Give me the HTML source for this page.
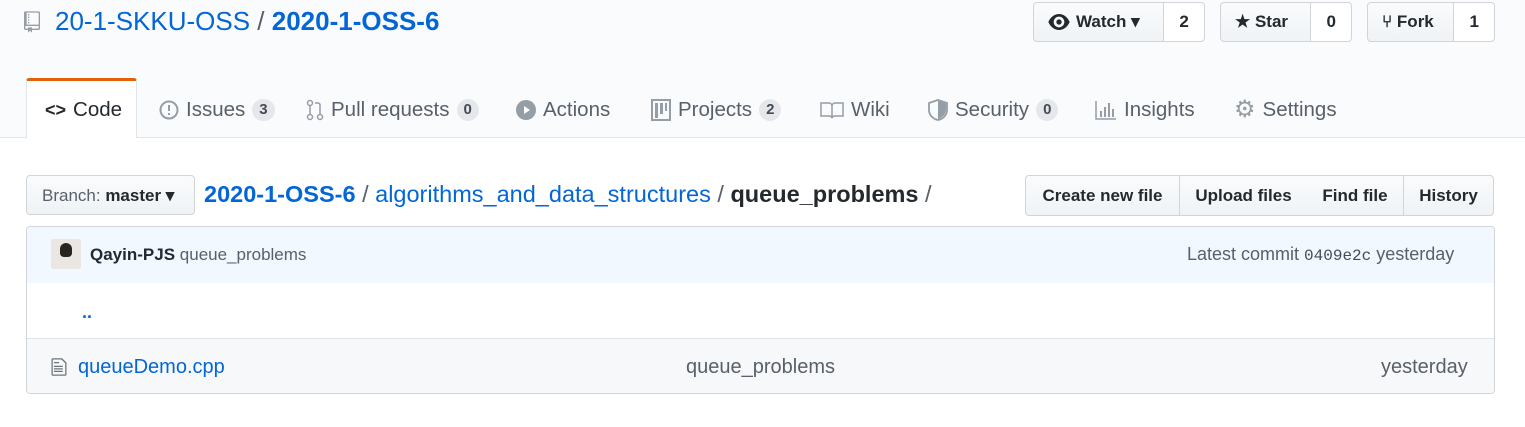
<!DOCTYPE html><html><head><style>
body{margin:0;width:1525px;height:427px;background:#fff;font-family:"Liberation Sans",sans-serif;position:relative;overflow:hidden;color:#24292e}
.a{position:absolute;white-space:nowrap}
.hdr{position:absolute;left:0;top:0;width:1525px;height:137px;background:#fafbfc;border-bottom:1px solid #e1e4e8}
.btn{position:absolute;top:2px;height:38px;border:1px solid #d1d5da;border-radius:4px;background:linear-gradient(#fafbfc,#eff3f6);font-size:17px;font-weight:bold;line-height:38px;display:flex}
.btn span{display:block;padding:0 14px}
.btn .c{background:#fff;border-left:1px solid #d1d5da;border-radius:0 4px 4px 0;padding:0;text-align:center}
.tab{position:absolute;top:96px;height:28px;font-size:20.5px;color:#586069;display:flex;align-items:center;gap:7px;line-height:28px}
.tab svg{flex:none}
.cnt{background:#e5e7ea;border-radius:12px;font-size:15px;padding:0 7px;line-height:22px;color:#444d56;font-weight:bold}
.rb{position:absolute;top:175px;height:39px;border:1px solid #d1d5da;background:linear-gradient(#fafbfc,#eff3f6);font-size:17px;font-weight:bold;line-height:39px;text-align:center;box-sizing:content-box}
</style></head><body>
<div class="hdr"></div>
<svg class="a" style="left:24px;top:11px" width="16" height="22" viewBox="0 0 12 16"><path fill="#959da5" d="M4 9H3V8h1v1zm0-3H3v1h1V6zm0-2H3v1h1V4zm0-2H3v1h1V2zm8-1v12c0 .55-.45 1-1 1H6v2l-1.5-1.5L3 16v-2H1c-.55 0-1-.45-1-1V1c0-.55.45-1 1-1h10c.55 0 1 .45 1 1zm-1 10H1v2h2v-1h3v1h5v-2zm0-10H2v9h9V1z"/></svg>
<div class="a" style="left:55px;top:6px;font-size:26px;color:#0366d6">20-1-SKKU-OSS <span style="color:#586069">/</span> <b>2020-1-OSS-6</b></div>
<div class="btn" style="left:1033px;width:170px"><span style="width:102px;padding:0 14px;display:flex;align-items:center;gap:6px"><svg width="22" height="16" viewBox="0 0 16 12"><path fill="#24292e" d="M8 0C4.5 0 1.5 2.5 0 6c1.5 3.5 4.5 6 8 6s6.5-2.5 8-6c-1.5-3.5-4.5-6-8-6zm0 10a4 4 0 110-8 4 4 0 010 8zm0-6a2 2 0 100 4 2 2 0 000-4z"/></svg>Watch ▾</span><span class="c" style="width:40px">2</span></div>
<div class="btn" style="left:1220px;width:130px"><span style="width:62px;padding:0 14px">★ Star</span><span class="c" style="width:40px">0</span></div>
<div class="btn" style="left:1367px;width:126px"><span style="width:58px;padding:0 14px">⑂ Fork</span><span class="c" style="width:40px">1</span></div>
<div class="a" style="left:26px;top:78px;width:111px;height:60px;background:#fff;border:1px solid #e1e4e8;border-top:3px solid #e36209;border-bottom:none;border-radius:3px 3px 0 0;box-sizing:border-box"></div>
<div class="tab" style="left:45px;color:#24292e"><b style="font-size:18px">&lt;&gt;</b>Code</div>
<div class="tab" style="left:159px"><svg width="20" height="20" viewBox="0 0 20 20"><circle cx="10" cy="10" r="8.5" fill="none" stroke="#959da5" stroke-width="2"/><rect x="9" y="5" width="2" height="6" fill="#959da5"/><rect x="9" y="13" width="2" height="2" fill="#959da5"/></svg>Issues <span class="cnt">3</span></div>
<div class="tab" style="left:306px"><svg width="18" height="22" viewBox="0 0 18 22"><circle cx="4" cy="4" r="2.5" fill="none" stroke="#959da5" stroke-width="1.5"/><circle cx="4" cy="18" r="2.5" fill="none" stroke="#959da5" stroke-width="1.5"/><circle cx="14" cy="18" r="2.5" fill="none" stroke="#959da5" stroke-width="1.5"/><path d="M4 6.5v9M14 15.5V6a2 2 0 00-2-2H9" stroke="#959da5" stroke-width="1.5" fill="none"/></svg>Pull requests <span class="cnt">0</span></div>
<div class="tab" style="left:516px"><svg width="20" height="20" viewBox="0 0 20 20"><circle cx="10" cy="10" r="10" fill="#959da5"/><path d="M8 6l6 4-6 4z" fill="#fff"/></svg>Actions</div>
<div class="tab" style="left:651px"><svg width="20" height="22" viewBox="0 0 20 22"><rect x="1" y="1" width="18" height="20" fill="none" stroke="#959da5" stroke-width="2"/><rect x="4" y="4" width="3" height="15" fill="#959da5"/><rect x="9" y="4" width="3" height="11" fill="#959da5"/><rect x="14" y="4" width="2" height="8" fill="#959da5"/></svg>Projects <span class="cnt">2</span></div>
<div class="tab" style="left:820px"><svg width="24" height="18" viewBox="0 0 24 18"><path d="M1 2h8a3 3 0 013 3v12a3 3 0 00-3-2H1zM23 2h-8a3 3 0 00-3 3v12a3 3 0 013-2h8z" fill="none" stroke="#959da5" stroke-width="1.5"/></svg>Wiki</div>
<div class="tab" style="left:928px"><svg width="20" height="22" viewBox="0 0 20 22"><path d="M10 1L1 4v7c0 5 4 9 9 10 5-1 9-5 9-10V4z" fill="none" stroke="#959da5" stroke-width="1.8"/><path d="M10 2v18c4-1 8-5 8-9V4.5z" fill="#959da5"/></svg>Security <span class="cnt">0</span></div>
<div class="tab" style="left:1095px"><svg width="22" height="20" viewBox="0 0 22 20"><path d="M1 1v18h20" fill="none" stroke="#959da5" stroke-width="1.5"/><rect x="5" y="11" width="2" height="6" fill="#959da5"/><rect x="9" y="7" width="2" height="10" fill="#959da5"/><rect x="13" y="3" width="2" height="14" fill="#959da5"/><rect x="17" y="9" width="2" height="8" fill="#959da5"/></svg>Insights</div>
<div class="tab" style="left:1234px"><span style="color:#959da5;font-size:24px">⚙</span>Settings</div>
<div class="a" style="left:26px;top:175px;width:169px;height:40px;border:1px solid #d1d5da;border-radius:4px;background:linear-gradient(#fafbfc,#eff3f6);font-size:17px;line-height:40px;color:#586069;padding-left:15px;box-sizing:border-box">Branch: <b style="color:#24292e">master ▾</b></div>
<div class="a" style="left:204px;top:181px;font-size:23.5px;color:#0366d6"><b>2020-1-OSS-6</b> <span style="color:#586069">/</span> algorithms_and_data_structures <span style="color:#586069">/</span> <b style="color:#24292e">queue_problems</b> <span style="color:#586069">/</span></div>
<div class="rb" style="left:1025px;width:153px;border-radius:4px 0 0 4px">Create new file</div>
<div class="rb" style="left:1179px;width:127px">Upload files</div>
<div class="rb" style="left:1307px;width:96px;border-left:none">Find file</div>
<div class="rb" style="left:1404px;width:89px;border-left:none;border-radius:0 4px 4px 0">History</div>
<div class="a" style="left:26px;top:226px;width:1469px;height:168px;border:1px solid #d1d5da;border-radius:4px;box-sizing:border-box;overflow:hidden">
<div style="height:56px;background:#f1f8ff;border:1px solid #c8e1ff;margin:-1px;border-radius:4px 4px 0 0"></div>
<div style="height:55px;background:#fff;border-bottom:1px solid #e1e4e8"></div>
<div style="height:56px;background:#f6f8fa"></div>
</div>
<div class="a" style="left:51px;top:239px;width:30px;height:30px;background:#eae6e2;border-radius:3px"><div style="margin:4px 0 0 9px;width:12px;height:14px;background:#2a2420;border-radius:6px 6px 4px 4px"></div></div>
<div class="a" style="left:90px;top:245px;font-size:17px"><b>Qayin-PJS</b> <span style="color:#586069">queue_problems</span></div>
<div class="a" style="left:1187px;top:244px;font-size:18px;color:#586069">Latest commit <span style="font-family:'Liberation Mono',monospace;font-size:16px;color:#444d56">0409e2c</span> yesterday</div>
<div class="a" style="left:82px;top:302px;font-size:18px;color:#0366d6;font-weight:bold">..</div>
<svg class="a" style="left:51px;top:357px" width="16" height="20" viewBox="0 0 12 16"><path fill="#6a737d" d="M6 5H2V4h4v1zM2 8h7V7H2v1zm0 2h7V9H2v1zm0 2h7v-1H2v1zm10-7.5V14c0 .55-.45 1-1 1H1c-.55 0-1-.45-1-1V2c0-.55.45-1 1-1h7.5L12 4.5zM11 5L8 2H1v12h10V5z"/></svg>
<div class="a" style="left:78px;top:356px;font-size:20px;color:#0366d6">queueDemo.cpp</div>
<div class="a" style="left:686px;top:356px;font-size:20px;color:#586069">queue_problems</div>
<div class="a" style="left:1381px;top:356px;font-size:20px;color:#586069">yesterday</div>
</body></html>
